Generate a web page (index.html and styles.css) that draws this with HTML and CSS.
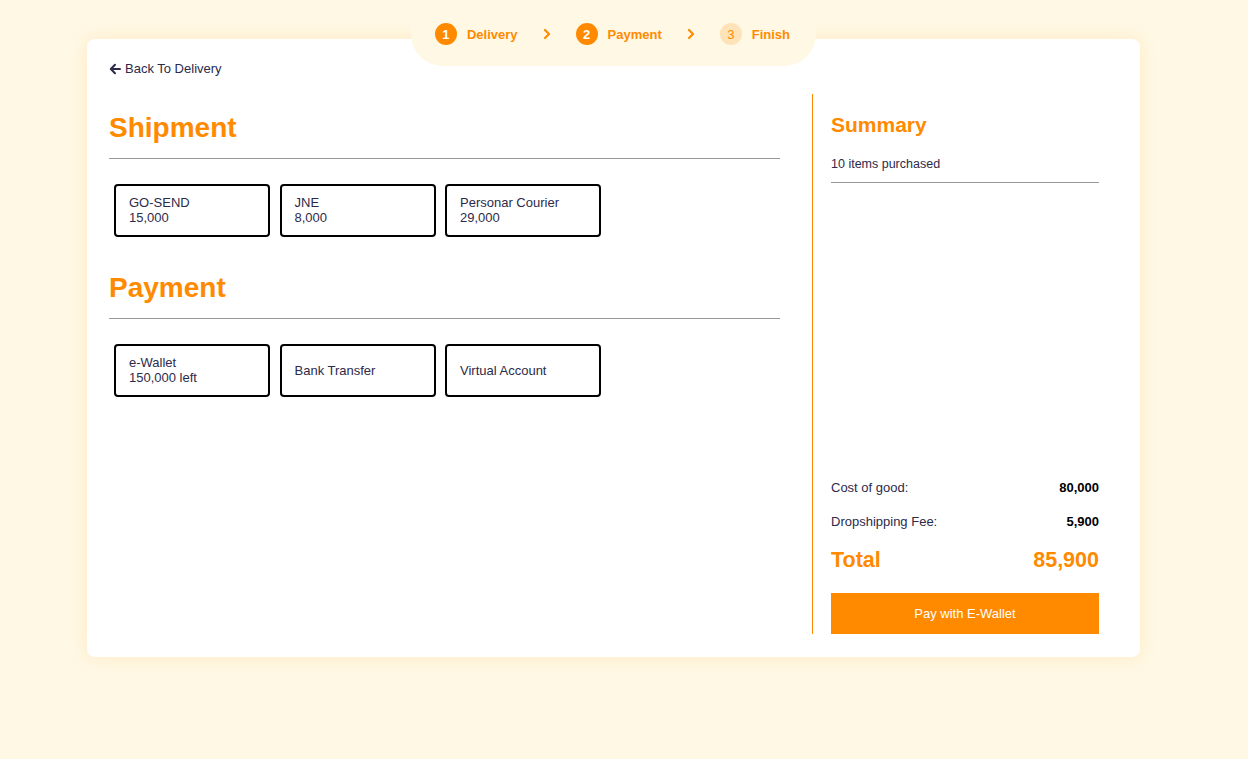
FILE: index.html
```html
<!DOCTYPE html>
<html>
<head>
<meta charset="utf-8">
<link rel="stylesheet" href="styles.css">
</head>
<body>
<div class="card">
  <div class="stepper">
    <div class="step"><span class="num">1</span><span class="label">Delivery</span></div>
    <svg class="chev" width="10" height="12" viewBox="0 0 10 12"><path d="M3 2 L7 6 L3 10" fill="none" stroke="#ff8a00" stroke-width="2.2" stroke-linecap="round" stroke-linejoin="round"/></svg>
    <div class="step"><span class="num">2</span><span class="label">Payment</span></div>
    <svg class="chev" width="10" height="12" viewBox="0 0 10 12"><path d="M3 2 L7 6 L3 10" fill="none" stroke="#ff8a00" stroke-width="2.2" stroke-linecap="round" stroke-linejoin="round"/></svg>
    <div class="step"><span class="num num-light">3</span><span class="label">Finish</span></div>
  </div>

  <a class="back"><svg width="12" height="12" viewBox="0 0 12 12"><path d="M11 6 H2 M6 1.8 L1.8 6 L6 10.2" fill="none" stroke="#2d2a4a" stroke-width="2" stroke-linecap="round" stroke-linejoin="round"/></svg><span>Back To Delivery</span></a>

  <div class="row">
    <div class="main">
      <h2 class="title">Shipment</h2>
      <div class="rule"></div>
      <div class="options">
        <div class="opt"><div>GO-SEND</div><div>15,000</div></div>
        <div class="opt"><div>JNE</div><div>8,000</div></div>
        <div class="opt"><div>Personar Courier</div><div>29,000</div></div>
      </div>
      <h2 class="title title-2">Payment</h2>
      <div class="rule"></div>
      <div class="options">
        <div class="opt"><div>e-Wallet</div><div>150,000 left</div></div>
        <div class="opt"><div>Bank Transfer</div></div>
        <div class="opt"><div>Virtual Account</div></div>
      </div>
    </div>
    <div class="summary">
      <h3 class="sum-title">Summary</h3>
      <div class="items">10 items purchased</div>
      <div class="sum-rule"></div>
      <div class="totals">
        <div class="line"><span>Cost of good:</span><b>80,000</b></div>
        <div class="line line-2"><span>Dropshipping Fee:</span><b>5,900</b></div>
        <div class="total"><span>Total</span><span>85,900</span></div>
        <button class="pay">Pay with E-Wallet</button>
      </div>
    </div>
  </div>
</div>
</body>
</html>
```

FILE: styles.css
```css
html, body {
  margin: 0;
  padding: 0;
  background: #fff8e5;
  font-family: "Liberation Sans", Arial, sans-serif;
  font-size: 13px;
  color: #2d2a4a;
}
body {
  padding-top: 39px;
  height: 720px;
}
.card {
  position: relative;
  margin-left: 87px;
  width: 1053px;
  height: 618px;
  box-sizing: border-box;
  padding: 22px 41px 23px 22px;
  background: #fff;
  border-radius: 8px;
  box-shadow: 0 0 18px rgba(255, 170, 40, 0.18);
  display: flex;
  flex-direction: column;
}
.stepper {
  position: absolute;
  top: -39px;
  left: 324px;
  width: 405px;
  height: 66px;
  box-sizing: border-box;
  padding-top: 23px;
  padding-right: 2px;
  background: #fff8e5;
  border-radius: 0 0 32px 32px;
  display: flex;
  justify-content: center;
  align-items: flex-start;
}
.step {
  display: flex;
  align-items: center;
  height: 22px;
}
.num {
  width: 22px;
  height: 22px;
  border-radius: 50%;
  background: #ff8a00;
  color: #fff;
  font-weight: bold;
  font-size: 13px;
  display: flex;
  align-items: center;
  justify-content: center;
}
.num-light {
  background: #ffe3b8;
  color: #ff8a00;
  font-weight: normal;
}
.label {
  margin-left: 10px;
  color: #ff8a00;
  font-weight: bold;
  font-size: 13px;
}
.chev {
  margin: 5px 24px 0 24px;
}
.back {
  display: flex;
  align-items: center;
  height: 16px;
  line-height: 16px;
  font-size: 13px;
  color: #2d2a4a;
}
.back svg {
  margin-right: 4px;
}
.row {
  margin-top: 17px;
  flex: 1;
  display: flex;
}
.main {
  width: 671px;
}
.title {
  margin: 18px 0 0 0;
  font-size: 28px;
  line-height: 32px;
  color: #ff8a00;
  font-weight: bold;
}
.title-2 {
  margin-top: 35px;
}
.rule {
  margin-top: 14px;
  height: 1px;
  background: #999;
}
.options {
  margin-top: 25px;
  padding-left: 5px;
  display: flex;
  gap: 9.5px;
}
.opt {
  width: 156px;
  height: 53px;
  box-sizing: border-box;
  border: 2px solid #000;
  border-radius: 4px;
  padding-left: 13px;
  padding-bottom: 1px;
  display: flex;
  flex-direction: column;
  justify-content: center;
  line-height: 15px;
  font-size: 13px;
  color: #2d2a4a;
}
.summary {
  margin-left: 32px;
  border-left: 1.5px solid #ff8a00;
  padding-left: 18px;
  flex: 1;
  display: flex;
  flex-direction: column;
}
.sum-title {
  margin: 18px 0 0 0;
  font-size: 21px;
  line-height: 26px;
  color: #ff8a00;
  font-weight: bold;
}
.items {
  margin-top: 18px;
  font-size: 12.5px;
  line-height: 16px;
}
.sum-rule {
  margin-top: 10px;
  height: 1px;
  background: #999;
}
.totals {
  margin-top: auto;
  display: flex;
  flex-direction: column;
}
.line {
  display: flex;
  justify-content: space-between;
  line-height: 16px;
  font-size: 13px;
}
.line b {
  color: #000;
}
.line-2 {
  margin-top: 18px;
}
.total {
  margin-top: 17px;
  display: flex;
  justify-content: space-between;
  font-size: 21.5px;
  line-height: 26px;
  font-weight: bold;
  color: #ff8a00;
}
.pay {
  margin-top: 20px;
  height: 41px;
  border: none;
  background: #ff8a00;
  color: #fff;
  font-family: "Liberation Sans", Arial, sans-serif;
  font-size: 13px;
  padding: 0;
}
```
